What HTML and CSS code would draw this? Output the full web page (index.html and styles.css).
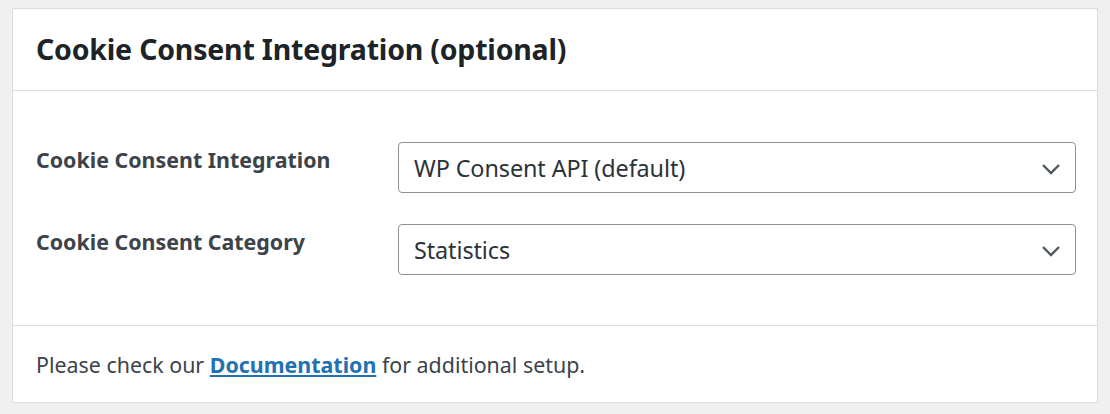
FILE: index.html
```html
<!DOCTYPE html>
<html>
<head>
<meta charset="utf-8">
<link rel="stylesheet" href="styles.css">
</head>
<body>
<div class="postbox">
  <div class="postbox-header">
    <h2 class="title">Cookie Consent Integration (optional)</h2>
  </div>
  <div class="postbox-body">
    <div class="row">
      <div class="label">Cookie Consent Integration</div>
      <div class="select">
        <span class="value">WP Consent API (default)</span>
        <svg class="chev" width="20" height="12" viewBox="0 0 20 12"><path d="M2 2 L10 10 L18 2" fill="none" stroke="#50575e" stroke-width="2.4"/></svg>
      </div>
    </div>
    <div class="row">
      <div class="label">Cookie Consent Category</div>
      <div class="select">
        <span class="value">Statistics</span>
        <svg class="chev" width="20" height="12" viewBox="0 0 20 12"><path d="M2 2 L10 10 L18 2" fill="none" stroke="#50575e" stroke-width="2.4"/></svg>
      </div>
    </div>
  </div>
  <div class="postbox-footer">
    <p class="note">Please check our <a href="#" class="doc">Documentation</a> for additional setup.</p>
  </div>
</div>
</body>
</html>
```
FILE: styles.css
```css
html, body {
  margin: 0;
  padding: 0;
  background: #f0f0f1;
}
body {
  padding: 8px 12px 0 12px;
  font-family: "Noto Sans", "Open Sans", sans-serif;
  color: #3c434a;
}
.postbox {
  width: 1084px;
  background: #fff;
  border: 1px solid #dcdcde;
}
.postbox-header {
  height: 81px;
  border-bottom: 1px solid #dcdcde;
  display: flex;
  align-items: center;
  padding-left: 23px;
}
.title {
  margin: 0;
  font-size: 28.5px;
  font-weight: 700;
  color: #1d2327;
  letter-spacing: -0.2px;
  line-height: 1.2;
}
.postbox-body {
  padding: 51px 21px 50px 23px;
  display: flex;
  flex-direction: column;
  gap: 31px;
  border-bottom: 1px solid #dcdcde;
}
.row {
  display: flex;
  align-items: flex-start;
}
.label {
  width: 362px;
  flex: none;
  font-size: 21.4px;
  font-weight: 700;
  line-height: 26px;
  margin-top: 5px;
  color: #3c434a;
}
.select {
  flex: 1;
  height: 49px;
  border: 1px solid #8c8f94;
  border-radius: 4px;
  display: flex;
  align-items: center;
  justify-content: space-between;
  padding: 0 14px 0 15px;
  font-size: 23.4px;
  color: #2c3338;
}
.value {
  letter-spacing: -0.1px;
}
.chev {
  display: block;
  margin-top: 2px;
}
.postbox-footer {
  height: 76px;
  display: flex;
  align-items: center;
  padding-left: 23px;
}
.note {
  margin: 0;
  font-size: 21.4px;
  color: #3c434a;
}
.doc {
  color: #2271b1;
  font-weight: 700;
  text-decoration: underline;
}
```
